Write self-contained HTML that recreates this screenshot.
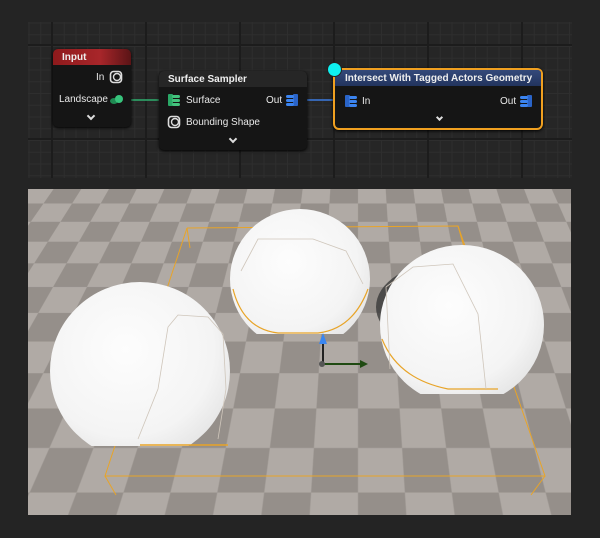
<!DOCTYPE html>
<html><head><meta charset="utf-8"><style>
*{margin:0;padding:0;box-sizing:border-box}
body{width:600px;height:538px;background:#242424;position:relative;overflow:hidden;font-family:"Liberation Sans",sans-serif}
.graph{position:absolute;left:28px;top:22px;width:544px;height:156px;background-color:#262626;
background-image:linear-gradient(90deg,transparent 23px,#1c1c1c 23px,#1c1c1c 25px,transparent 25px),linear-gradient(180deg,transparent 22px,#1c1c1c 22px,#1c1c1c 24px,transparent 24px),linear-gradient(90deg,#2e2e2e 1px,transparent 1px),linear-gradient(180deg,#2e2e2e 1px,transparent 1px);
background-size:94px 94px,94px 94px,11.75px 11.75px,11.75px 11.75px;background-position:0 0,0 0,0.5px 0,0 0.5px}
.node{position:absolute;background:#151515;border-radius:5px;box-shadow:0 1px 3px #000;color:#e8e8e8;font-size:10px}
.hd{height:16px;border-radius:5px 5px 0 0;font-weight:bold;font-size:10px;padding:3px 0 0 9px;color:#eee}
.pin{position:absolute;font-size:10px}
.chev{position:absolute;width:6px;height:6px;border-right:2px solid #ddd;border-bottom:2px solid #ddd;transform:rotate(45deg)}
.vp{position:absolute;left:28px;top:189px;width:543px;height:326px;overflow:hidden;background:#a9a39e;perspective:420px;perspective-origin:330px 163px}
.plane{position:absolute;left:-1200px;top:-1200px;width:2943px;height:2726px;transform:rotateX(35deg);
background-color:#b0aaa5;background-image:conic-gradient(#958f8a 0 25%,transparent 0 50%,#958f8a 0 75%,transparent 0);background-size:76px 76px;background-position:10px 20px}
</style></head><body>
<div class="graph"></div>
<svg style="position:absolute;left:0;top:0" width="600" height="180">
<line x1="122" y1="100" x2="168" y2="100" stroke="#2fae6e" stroke-width="1.5"/>
<line x1="298" y1="100" x2="345" y2="100" stroke="#3b7be0" stroke-width="1.5"/>
</svg>
<div class="node" style="left:53px;top:49px;width:78px;height:78px">
<div class="hd" style="background:linear-gradient(90deg,#8e1a1c,#a8262a 60%,#5a1416)">Input</div>
<div class="pin" style="left:43px;top:23px">In</div>
<svg style="position:absolute;left:56px;top:21px" width="14" height="14"><rect x="1.5" y="1.5" width="11" height="11" rx="3" fill="none" stroke="#ddd" stroke-width="1.6"/><circle cx="8" cy="7" r="3.5" fill="none" stroke="#ddd" stroke-width="1.4"/></svg>
<div class="pin" style="left:6px;top:45px">Landscape</div>
<svg style="position:absolute;left:56px;top:45px" width="16" height="12"><ellipse cx="5" cy="7" rx="4" ry="3" fill="#1f8a52"/><circle cx="10" cy="5" r="4" fill="#37c47c"/></svg>
<div class="chev" style="left:35px;top:64px"></div>
</div>
<div class="node" style="left:159px;top:71px;width:148px;height:79px">
<div class="hd" style="background:#262626">Surface Sampler</div>
<svg style="position:absolute;left:8px;top:22px" width="14" height="14"><rect x="1" y="1" width="5" height="12" rx="1" fill="#2aa866"/><rect x="5" y="2" width="8" height="3" rx="1.5" fill="#44c47e"/><rect x="5" y="6" width="8" height="3" rx="1.5" fill="#44c47e"/><rect x="5" y="10" width="8" height="3" rx="1.5" fill="#44c47e"/></svg>
<div class="pin" style="left:27px;top:24px">Surface</div>
<div class="pin" style="left:107px;top:24px">Out</div>
<svg style="position:absolute;left:126px;top:22px" width="14" height="14"><rect x="8" y="1" width="5" height="12" rx="1" fill="#2a64c8"/><rect x="1" y="2" width="8" height="3" rx="1.5" fill="#3b84f0"/><rect x="1" y="6" width="8" height="3" rx="1.5" fill="#3b84f0"/><rect x="1" y="10" width="8" height="3" rx="1.5" fill="#3b84f0"/></svg>
<svg style="position:absolute;left:8px;top:44px" width="14" height="14"><rect x="1.5" y="1.5" width="11" height="11" rx="3" fill="none" stroke="#ddd" stroke-width="1.6"/><circle cx="8" cy="7" r="3.5" fill="none" stroke="#ddd" stroke-width="1.4"/></svg>
<div class="pin" style="left:27px;top:46px">Bounding Shape</div>
<div class="chev" style="left:71px;top:65px"></div>
</div>
<div class="node" style="left:333px;top:68px;width:210px;height:62px;border:2px solid #f0a020;border-radius:6px">
<div class="hd" style="background:linear-gradient(180deg,#34497a,#22345e);border-radius:3px 3px 0 0;padding-left:10px">Intersect With Tagged Actors Geometry</div>
<svg style="position:absolute;left:9px;top:24px" width="14" height="14"><rect x="1" y="1" width="5" height="12" rx="1" fill="#2a64c8"/><rect x="5" y="2" width="8" height="3" rx="1.5" fill="#3b84f0"/><rect x="5" y="6" width="8" height="3" rx="1.5" fill="#3b84f0"/><rect x="5" y="10" width="8" height="3" rx="1.5" fill="#3b84f0"/></svg>
<div class="pin" style="left:27px;top:26px">In</div>
<div class="pin" style="left:165px;top:26px">Out</div>
<svg style="position:absolute;left:184px;top:24px" width="14" height="14"><rect x="8" y="1" width="5" height="12" rx="1" fill="#2a64c8"/><rect x="1" y="2" width="8" height="3" rx="1.5" fill="#3b84f0"/><rect x="1" y="6" width="8" height="3" rx="1.5" fill="#3b84f0"/><rect x="1" y="10" width="8" height="3" rx="1.5" fill="#3b84f0"/></svg>
<div class="chev" style="left:102px;top:45px;width:5px;height:5px"></div>
</div>
<div style="position:absolute;left:327px;top:62px;width:15px;height:15px;border-radius:50%;background:#0ff0f0;border:1px solid #222"></div>
<div class="vp"><div class="plane"></div></div>
<svg style="position:absolute;left:28px;top:189px" width="543" height="326">
<defs>
<radialGradient id="s" cx="0.42" cy="0.38" r="0.65"><stop offset="0" stop-color="#fdfdfd"/><stop offset="0.75" stop-color="#f4f4f4"/><stop offset="1" stop-color="#e6e6e6"/></radialGradient>
<clipPath id="c1"><rect x="0" y="0" width="543" height="257"/></clipPath>
<clipPath id="c2"><rect x="0" y="0" width="543" height="145"/></clipPath>
<clipPath id="c3"><rect x="0" y="0" width="543" height="205"/></clipPath>
</defs>
<g fill="none" stroke="#e8a428" stroke-width="1">
<polyline points="159,39 430,37 517,287 77,287 159,39"/>
<line x1="77" y1="287" x2="88" y2="306"/><line x1="517" y1="287" x2="503" y2="306"/>
<line x1="159" y1="39" x2="162" y2="59"/><line x1="430" y1="37" x2="436" y2="58"/>
</g>
<ellipse cx="420" cy="118" rx="72" ry="45" fill="#333" opacity="0.75"/>
<ellipse cx="112" cy="182" rx="90" ry="89" fill="url(#s)" clip-path="url(#c1)"/>
<path d="M112 256 L200 256" stroke="#e8a428" stroke-width="1.5"/>
<ellipse cx="272" cy="90" rx="70" ry="70" fill="url(#s)" clip-path="url(#c2)"/>
<path d="M205 100 Q215 140 250 144 L290 144 Q325 140 340 100" stroke="#e8a428" stroke-width="1.2" fill="none"/>
<ellipse cx="434" cy="136" rx="82" ry="80" fill="url(#s)" clip-path="url(#c3)"/>
<path d="M354 150 Q370 190 420 200 L470 200" stroke="#e8a428" stroke-width="1.2" fill="none"/>
<g stroke="#cfc6bb" stroke-width="0.8" fill="none">
<path d="M140 138 L150 126 L180 128 L195 145 L198 200 L190 250 M140 138 L130 200 L110 250"/>
<path d="M213 82 L230 50 L285 50 L318 62 L335 95"/>
<path d="M358 98 L385 78 L425 75 L450 125 L458 200 M358 98 L362 180"/>
</g>
<line x1="295" y1="148" x2="295" y2="175" stroke="#222" stroke-width="2"/>
<path d="M291 155 L295 144 L299 155 Z" fill="#3a86f0"/>
<line x1="295" y1="175" x2="335" y2="175" stroke="#1f4a12" stroke-width="2"/>
<path d="M332 171 L340 175 L332 179 Z" fill="#1f4a12"/>
<circle cx="294" cy="175" r="3" fill="#555"/>
</svg>
</body></html>
